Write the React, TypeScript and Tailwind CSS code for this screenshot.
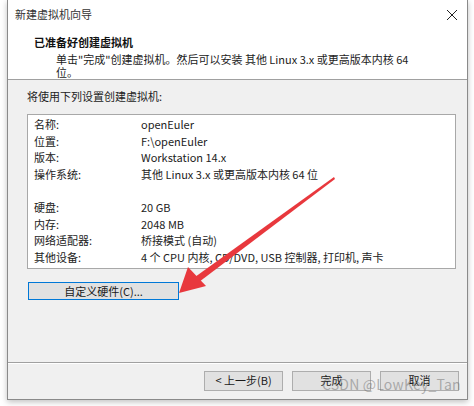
import React from 'react';

const rows: [string, string][] = [
  ['名称:', 'openEuler'],
  ['位置:', 'F:\\openEuler'],
  ['版本:', 'Workstation 14.x'],
  ['操作系统:', '其他 Linux 3.x 或更高版本内核 64 位'],
  ['', ''],
  ['硬盘:', '20 GB'],
  ['内存:', '2048 MB'],
  ['网络适配器:', '桥接模式 (自动)'],
  ['其他设备:', '4 个 CPU 内核, CD/DVD, USB 控制器, 打印机, 声卡'],
];

const font = { fontFamily: '"Noto Sans CJK SC", "Noto Sans", sans-serif' };

function DialogButton({ label }: { label: string }) {
  return (
    <button className="w-[79px] h-[20px] bg-[#e1e1e1] border border-[#adadad] text-[11px] text-[#1a1a1a] leading-none">
      {label}
    </button>
  );
}

export default function App() {
  return (
    <div className="relative w-[474px] h-[406px] bg-white overflow-hidden" style={font}>
      {/* wizard window */}
      <div className="ml-[7px] w-[461px] h-[400px] flex flex-col bg-[#f0f0f0] border-x border-b border-[#8a8a8a] shadow-[0_2px_6px_rgba(0,0,0,0.25)]">
        {/* title bar */}
        <div className="h-[28px] shrink-0 bg-white flex items-center justify-between pl-[7px] pr-[9px]">
          <span className="text-[11px] text-[#333]">新建虚拟机向导</span>
          <svg width="12" height="12" viewBox="0 0 12 12" className="mt-[1px]">
            <path d="M1 1 L11 11 M11 1 L1 11" stroke="#222" strokeWidth="1" />
          </svg>
        </div>

        {/* header */}
        <div className="h-[52px] shrink-0 bg-white border-b border-[#a0a0a0] pl-[26px] pt-[6px]">
          <div className="text-[11px] font-bold text-[#111] leading-[16px]">已准备好创建虚拟机</div>
          <div className="pl-[22px] text-[11px] text-[#222] leading-[13px] mt-[3px]">
            <div className="h-[13px]">单击"完成"创建虚拟机。然后可以安装 其他 Linux 3.x 或更高版本内核 64</div>
            <div className="h-[13px]">位。</div>
          </div>
        </div>

        {/* settings summary */}
        <div className="flex-1 flex flex-col px-[19px] pt-[8px]">
          <div className="text-[11px] text-[#222] leading-[16px]">将使用下列设置创建虚拟机:</div>
          <div className="mt-[10px] h-[155px] w-[429px] bg-white border border-[#a8a8a8] pl-[6px] pt-[1px]">
            {rows.map(([label, value], i) => (
              <div key={i} className="flex h-[16.6px] items-center text-[11px] text-[#222]">
                <span className="w-[107px] shrink-0">{label}</span>
                <span>{value}</span>
              </div>
            ))}
          </div>
          <button className="mt-[13px] ml-[1px] w-[151px] h-[18px] bg-[#e1e1e1] border border-[#0078d7] text-[11px] text-[#1a1a1a] leading-none">
            自定义硬件(C)...
          </button>
        </div>

        {/* footer */}
        <div className="h-[37px] shrink-0 border-t border-[#a0a0a0] shadow-[inset_0_1px_0_#fff] flex items-center justify-end gap-[9px] pr-[8px] pb-[1px]">
          <DialogButton label="< 上一步(B)" />
          <DialogButton label="完成" />
          <DialogButton label="取消" />
        </div>
      </div>

      {/* red annotation arrow */}
      <svg className="absolute left-0 top-0 pointer-events-none" width="474" height="406">
        <polygon points="334,177 335,179 199,282 195,277" fill="#e8383d" />
        <polygon points="179,293 188,267 206,286" fill="#e8383d" />
      </svg>

      <div className="absolute left-[322px] top-[374px] text-[14px] text-[rgba(110,110,110,0.5)] tracking-[0.2px] pointer-events-none">
        CSDN @LowKey_Tan
      </div>
    </div>
  );
}
